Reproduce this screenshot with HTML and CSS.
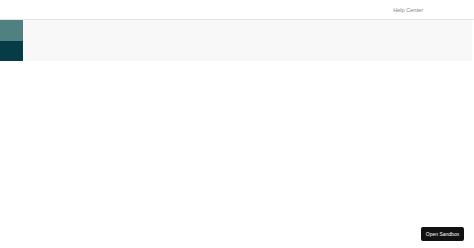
FILE: index.html
```html
<!DOCTYPE html>
<html>
<head>
<meta charset="utf-8">
<link rel="stylesheet" href="styles.css">
</head>
<body>
<header class="topbar">
  <a class="help" href="#">Help Center</a>
</header>
<main class="row">
  <div class="swatch">
    <div class="sw-light"></div>
    <div class="sw-dark"></div>
  </div>
  <div class="panel"></div>
</main>
<button class="sandbox">Open Sandbox</button>
</body>
</html>
```
FILE: styles.css
```css
html, body { margin: 0; padding: 0; background: #fff; }
body { font-family: "Liberation Sans", Arial, sans-serif; width: 474px; height: 248px; overflow: hidden; }
.topbar {
  height: 20px;
  border-bottom: 1px solid #e4e4e4;
  display: flex;
  align-items: center;
  justify-content: flex-end;
  padding-right: 51px;
  box-sizing: border-box;
}
.help { font-size: 5.6px; color: #858585; text-decoration: none; }
.row { display: flex; height: 41px; padding-right: 2px; }
.swatch { width: 23px; display: flex; flex-direction: column; }
.sw-light { flex: 1; background: #4f8181; }
.sw-dark { flex: 1; background: #063c45; }
.panel { flex: 1; margin-left: 1px; background: #f8f8f8; }
.sandbox {
  position: fixed;
  left: 421px;
  top: 227px;
  width: 43px;
  height: 14px;
  padding: 0;
  border: 0;
  border-radius: 2px;
  background: #111;
  color: #fff;
  font-family: "Liberation Sans", Arial, sans-serif;
  font-size: 5px;
}
```
